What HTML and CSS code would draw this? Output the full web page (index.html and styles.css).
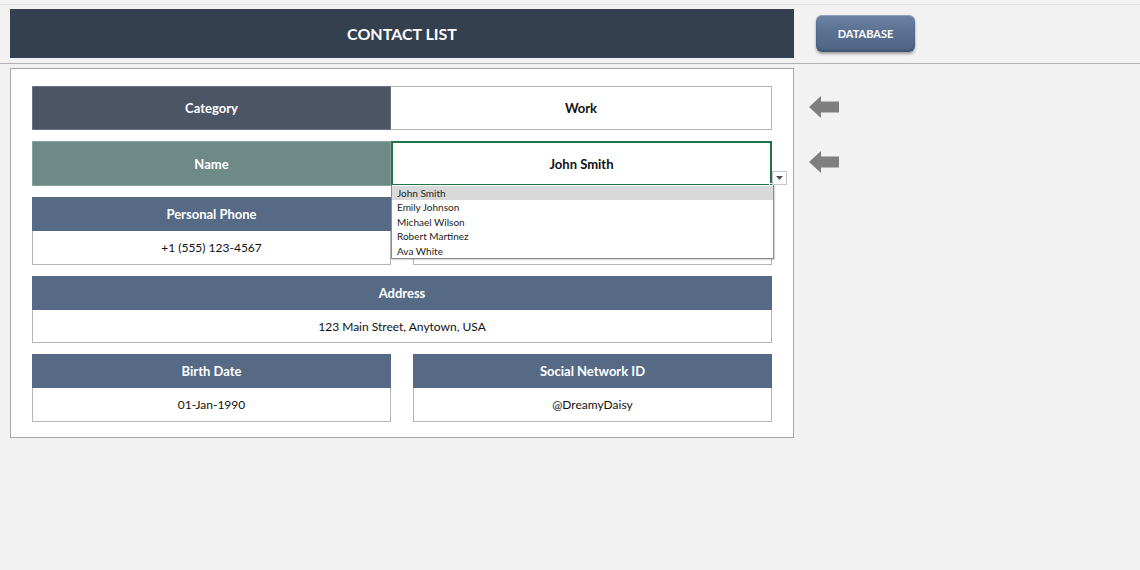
FILE: index.html
```html
<!DOCTYPE html>
<html lang="en">
<head>
<meta charset="utf-8">
<title>Contact List</title>
<link rel="stylesheet" href="styles.css">
</head>
<body>
<div class="topline"></div>
<div class="topbar">
  <div class="title">CONTACT LIST</div>
  <div class="btn">DATABASE</div>
</div>
<div class="divider"></div>
<div class="main">
  <div class="panel">
    <div class="row">
      <div class="lbl lbl-cat">Category</div>
      <div class="val">Work</div>
    </div>
    <div class="row">
      <div class="lbl lbl-name">Name</div>
      <div class="val val-sel">John Smith
        <span class="corner"></span>
        <span class="ddbtn"><svg width="7" height="4" viewBox="0 0 7 4"><path d="M0 0h7L3.5 4z" fill="#555"/></svg></span>
        <div class="ddlist">
          <div class="dditem active">John Smith</div>
          <div class="dditem">Emily Johnson</div>
          <div class="dditem">Michael Wilson</div>
          <div class="dditem">Robert Martinez</div>
          <div class="dditem">Ava White</div>
        </div>
      </div>
    </div>
    <div class="pair">
      <div class="box">
        <div class="bh">Personal Phone</div>
        <div class="bv">+1 (555) 123-4567</div>
      </div>
      <div class="box">
        <div class="bh">Work Phone</div>
        <div class="bv">+1 (555) 987-6543</div>
      </div>
    </div>
    <div class="box full">
      <div class="bh">Address</div>
      <div class="bv">123 Main Street, Anytown, USA</div>
    </div>
    <div class="pair">
      <div class="box">
        <div class="bh">Birth Date</div>
        <div class="bv">01-Jan-1990</div>
      </div>
      <div class="box">
        <div class="bh">Social Network ID</div>
        <div class="bv">@DreamyDaisy</div>
      </div>
    </div>
  </div>
  <div class="arrows">
    <svg class="arrow" width="31" height="22" viewBox="0 0 31 22"><path d="M0 11L12 0V5.5H30V16.5H12V22Z" fill="#7f7f7f"/></svg>
    <svg class="arrow" width="31" height="22" viewBox="0 0 31 22"><path d="M0 11L12 0V5.5H30V16.5H12V22Z" fill="#7f7f7f"/></svg>
  </div>
</div>
</body>
</html>
```
FILE: styles.css
```css
* { box-sizing: border-box; }
html, body { margin: 0; padding: 0; }
body {
  background: #f2f2f2;
  font-family: Lato, "Open Sans", "Liberation Sans", sans-serif;
  color: #111;
  width: 1140px;
  height: 570px;
  overflow: hidden;
}
.topline {
  height: 5px;
  border-bottom: 1px solid #e2e2e2;
}
.topbar {
  display: flex;
  align-items: flex-start;
  padding: 4px 0 0 10px;
  height: 58px;
}
.title {
  width: 784px;
  height: 49px;
  background: #343f4f;
  color: #fff;
  font-weight: 700;
  font-size: 16px;
  display: flex;
  align-items: center;
  justify-content: center;
}
.btn {
  margin: 6px 0 0 22px;
  width: 99px;
  height: 37px;
  border-radius: 6px;
  background: linear-gradient(#6b82a2 0%, #5b7191 45%, #4d6383 100%);
  box-shadow: 0 2px 3px rgba(0,0,0,0.35), inset 0 1px 0 rgba(255,255,255,0.25), inset 0 -2px 2px rgba(0,0,0,0.15);
  color: #fff;
  font-weight: 700;
  font-size: 11px;
  display: flex;
  align-items: center;
  justify-content: center;
}
.divider {
  height: 1px;
  background: #b2b2b2;
}
.main {
  display: flex;
  align-items: flex-start;
  padding: 4px 0 0 10px;
}
.panel {
  width: 784px;
  height: 370px;
  background: #fff;
  border: 1px solid #a6a6a6;
  padding: 17px 0 0 21px;
  display: flex;
  flex-direction: column;
  gap: 11px;
}
.row {
  display: flex;
  width: 740px;
  height: 45px;
}
.row:first-child { height: 44px; }
.lbl {
  width: 359px;
  color: #fff;
  font-weight: 700;
  font-size: 13px;
  display: flex;
  align-items: center;
  justify-content: center;
}
.lbl-cat { background: #4b5565; border: 1px solid #6b7280; }
.lbl-name { background: #6e8a87; border: 1px solid #8aa19e; }
.val {
  position: relative;
  width: 381px;
  border: 1px solid #b5b5b5;
  border-left: none;
  font-weight: 700;
  font-size: 13px;
  display: flex;
  align-items: center;
  justify-content: center;
}
.val-sel {
  border: 2px solid #217346;
}
.corner {
  position: absolute;
  right: -4px;
  bottom: -4px;
  width: 5px;
  height: 5px;
  background: #217346;
  border: 1px solid #fff;
}
.ddbtn {
  position: absolute;
  right: -17px;
  bottom: -1px;
  width: 15px;
  height: 14px;
  background: #fff;
  border: 1px solid #c6c6c6;
  display: flex;
  align-items: center;
  justify-content: center;
}
.ddlist {
  position: absolute;
  top: calc(100% + 1px);
  left: -2px;
  width: 383px;
  height: 74px;
  background: #fff;
  border: 1px solid #8c8c8c;
  border-top: none;
  box-shadow: 1px 1px 1px rgba(0,0,0,0.15);
  padding-top: 1px;
  z-index: 5;
  font-weight: 400;
}
.dditem {
  height: 14.4px;
  line-height: 14px;
  font-size: 10px;
  padding-left: 5px;
  color: #222;
}
.dditem.active { background: #d9d9d9; }
.pair {
  display: flex;
  gap: 22px;
  width: 740px;
}
.box {
  width: 359px;
  height: 68px;
  display: flex;
  flex-direction: column;
  border: 1px solid #b5b5b5;
}
.box.full { width: 740px; height: 67px; }
.bh {
  height: 34px;
  background: #566a86;
  color: #fff;
  font-weight: 700;
  font-size: 13px;
  display: flex;
  align-items: center;
  justify-content: center;
  margin: -1px -1px 0 -1px;
}
.bv {
  flex: 1;
  display: flex;
  align-items: center;
  justify-content: center;
  font-size: 12px;
  color: #111;
}
.arrows {
  display: flex;
  flex-direction: column;
  gap: 33px;
  padding: 28px 0 0 15px;
}
.arrow { display: block; }
```
